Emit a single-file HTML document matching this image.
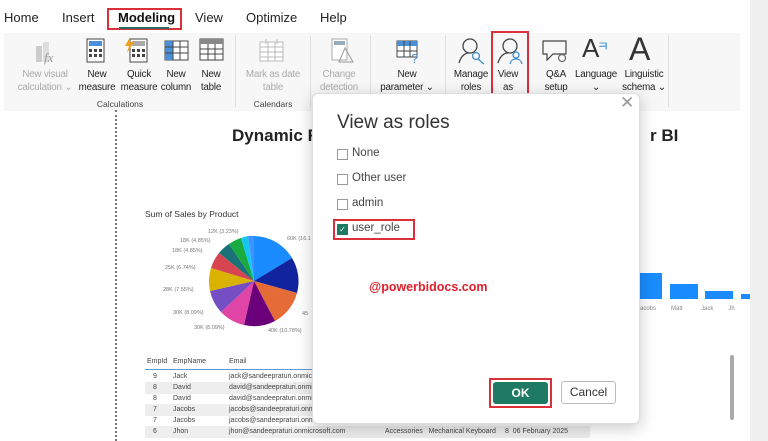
<!DOCTYPE html>
<html><head><style>
*{margin:0;padding:0;box-sizing:border-box}
body{width:768px;height:441px;overflow:hidden;background:#fff;font-family:"Liberation Sans",sans-serif;position:relative;color:#222}
.a{position:absolute}
.tab{position:absolute;top:10px;font-size:13px;color:#222}
.lbl{position:absolute;font-size:9.8px;text-align:center;line-height:13px;color:#222;white-space:nowrap;letter-spacing:-0.2px}
.dis{color:#aaa}
.grp{position:absolute;font-size:8.5px;color:#444;top:99px;text-align:center}
.sep{position:absolute;top:35px;width:1px;height:72px;background:#e0e0e0}
.cb{position:absolute;left:337px;width:11px;height:11px;border:1px solid #999;background:#fff}
.ct{position:absolute;left:352px;font-size:11.5px;color:#444}
.row{position:absolute;left:145px;width:445px;height:12px;font-size:7px;color:#444;line-height:12px}
.row span{position:absolute}
</style></head><body>
<div class="tab" style="left:4px">Home</div>
<div class="tab" style="left:62px">Insert</div>
<div class="tab" style="left:118px;font-weight:bold;color:#111">Modeling</div>
<div class="a" style="left:107px;top:8px;width:75px;height:22px;border:2px solid #d9303a"></div>
<div class="a" style="left:119px;top:27px;width:50px;height:2px;background:#2f6a60"></div>
<div class="tab" style="left:195px">View</div>
<div class="tab" style="left:246px">Optimize</div>
<div class="tab" style="left:320px">Help</div>
<div class="a" style="left:4px;top:33px;width:736px;height:78px;background:#f7f7f7"></div>
<div class="a" style="left:750px;top:0;width:18px;height:441px;background:#f0f0f0"></div>
<svg class="a" style="left:30px;top:38px" width="30" height="28"><rect x="6" y="8" width="6" height="16" fill="#ccc"/><rect x="13" y="4" width="6" height="20" fill="#ddd"/><text x="14" y="24" font-size="13" font-style="italic" fill="#999" font-family="Liberation Serif">fx</text></svg>
<svg class="a" style="left:86px;top:38px" width="20" height="26"><rect x="1" y="1" width="17" height="23" fill="#fff" stroke="#444"/><rect x="3" y="3" width="13" height="5" fill="#4a90d9"/><g fill="#444"><rect x="3" y="11" width="3" height="3"/><rect x="8" y="11" width="3" height="3"/><rect x="13" y="11" width="3" height="3"/><rect x="3" y="16" width="3" height="3"/><rect x="8" y="16" width="3" height="3"/><rect x="13" y="16" width="3" height="3"/></g></svg>
<svg class="a" style="left:123px;top:36px" width="26" height="28"><rect x="7" y="3" width="17" height="23" fill="#fff" stroke="#444"/><rect x="9" y="5" width="13" height="5" fill="#aaa"/><g fill="#444"><rect x="9" y="13" width="3" height="3"/><rect x="14" y="13" width="3" height="3"/><rect x="19" y="13" width="3" height="3"/><rect x="9" y="18" width="3" height="3"/><rect x="14" y="18" width="3" height="3"/><rect x="19" y="18" width="3" height="3"/></g><path d="M7 1 L2 10 H6 L4 17 L11 6 H7 Z" fill="#f0a020"/></svg>
<svg class="a" style="left:164px;top:40px" width="26" height="22"><rect x="1" y="1" width="23" height="19" fill="#fff" stroke="#444"/><rect x="1" y="1" width="8" height="19" fill="#4a90d9"/><path d="M1 7H24M1 13H24M9 1V20M16 1V20" stroke="#444"/></svg>
<svg class="a" style="left:199px;top:38px" width="26" height="24"><rect x="1" y="1" width="23" height="21" fill="#fff" stroke="#444"/><rect x="1" y="1" width="23" height="5" fill="#888"/><path d="M1 11H24M1 16H24M9 6V22M16 6V22" stroke="#444"/></svg>
<svg class="a" style="left:259px;top:38px" width="26" height="24"><rect x="1" y="4" width="23" height="19" fill="#fff" stroke="#bbb"/><path d="M1 9H24M1 14H24M1 19H24M9 4V23M16 4V23M7 1V6M18 1V6" stroke="#bbb"/></svg>
<svg class="a" style="left:330px;top:38px" width="26" height="26"><rect x="2" y="1" width="15" height="21" fill="#fff" stroke="#aaa"/><rect x="4" y="3" width="11" height="4" fill="#9ab"/><path d="M15 10 L23 24 H9 Z" fill="none" stroke="#999"/></svg>
<svg class="a" style="left:396px;top:40px" width="26" height="24"><rect x="1" y="1" width="20" height="16" fill="#fff" stroke="#444"/><rect x="1" y="1" width="20" height="5" fill="#4a90d9"/><path d="M1 11H21M8 1V17M14 1V17" stroke="#444"/><text x="15" y="23" font-size="13" fill="#4a90d9">?</text></svg>
<svg class="a" style="left:458px;top:37px" width="28" height="28" fill="none" stroke="#444" stroke-width="1.3"><circle cx="12" cy="9" r="7"/><path d="M1 26 C3 19 7 16 11 16"/><circle cx="18" cy="19" r="3.5" stroke="#3a8fd0"/><path d="M20 22 L26 27" stroke="#3a8fd0"/></svg>
<svg class="a" style="left:496px;top:37px" width="28" height="28" fill="none" stroke="#444" stroke-width="1.3"><circle cx="14" cy="9" r="7"/><path d="M2 26 C4 19 8 16 12 16"/><circle cx="20" cy="18" r="3" stroke="#3a8fd0"/><path d="M14 27 C15 23 17 22 20 22 C23 22 25 23 26 27" stroke="#3a8fd0"/></svg>
<svg class="a" style="left:541px;top:39px" width="28" height="26" fill="none" stroke="#444" stroke-width="1.2"><path d="M2 2H25V15H12L6 21V15H2Z"/><circle cx="21" cy="19" r="3.5" stroke="#666"/></svg>
<div class="a" style="left:582px;top:33px;font-size:26px;color:#333">A</div>
<div class="a" style="left:597px;top:36px;font-size:13px;color:#3a8fd0">ㅋ</div>
<div class="a" style="left:629px;top:31px;font-size:32px;color:#333">A</div>
<div class="lbl dis" style="left:14px;top:68px;width:62px">New visual<br>calculation ⌄</div>
<div class="lbl" style="left:76px;top:68px;width:42px">New<br>measure</div>
<div class="lbl" style="left:118px;top:68px;width:42px">Quick<br>measure</div>
<div class="lbl" style="left:157px;top:68px;width:38px">New<br>column</div>
<div class="lbl" style="left:195px;top:68px;width:32px">New<br>table</div>
<div class="lbl dis" style="left:238px;top:68px;width:70px">Mark as date<br>table</div>
<div class="lbl dis" style="left:315px;top:68px;width:48px">Change<br>detection</div>
<div class="lbl" style="left:375px;top:68px;width:64px">New<br>parameter ⌄</div>
<div class="lbl" style="left:450px;top:68px;width:42px">Manage<br>roles</div>
<div class="lbl" style="left:493px;top:68px;width:30px">View<br>as</div>
<div class="lbl" style="left:538px;top:68px;width:36px">Q&amp;A<br>setup</div>
<div class="lbl" style="left:571px;top:68px;width:50px">Language<br>⌄</div>
<div class="lbl" style="left:620px;top:68px;width:48px">Linguistic<br>schema ⌄</div>
<div class="a" style="left:491px;top:31px;width:38px;height:65px;border:2px solid #d9303a"></div>
<div class="grp" style="left:70px;width:100px">Calculations</div>
<div class="grp" style="left:238px;width:70px">Calendars</div>
<div class="sep" style="left:235px"></div><div class="sep" style="left:310px"></div><div class="sep" style="left:370px"></div><div class="sep" style="left:445px"></div><div class="sep" style="left:668px"></div>
<div class="a" style="left:115px;top:110px;height:331px;border-left:2px dotted #777"></div>
<div class="a" style="left:232px;top:126px;font-size:17px;font-weight:bold;color:#222">Dynamic R</div>
<div class="a" style="left:650px;top:126px;font-size:17px;font-weight:bold;color:#222">r BI</div>
<div class="a" style="left:145px;top:209px;font-size:8.5px;color:#333">Sum of Sales by Product</div>
<svg class="a" style="left:150px;top:225px" width="170" height="115">
<g transform="translate(104,56)">
<path d="M0 0 L0 -45 A45 45 0 0 1 38 -23 Z" fill="#1a8cff"/>
<path d="M0 0 L38 -23 A45 45 0 0 1 43 12 Z" fill="#12239e"/>
<path d="M0 0 L43 12 A45 45 0 0 1 21 40 Z" fill="#e66c37"/>
<path d="M0 0 L21 40 A45 45 0 0 1 -10 44 Z" fill="#6b007b"/>
<path d="M0 0 L-10 44 A45 45 0 0 1 -33 31 Z" fill="#e044a7"/>
<path d="M0 0 L-33 31 A45 45 0 0 1 -44 10 Z" fill="#744ec2"/>
<path d="M0 0 L-44 10 A45 45 0 0 1 -43 -13 Z" fill="#d9b300"/>
<path d="M0 0 L-43 -13 A45 45 0 0 1 -35 -28 Z" fill="#d64550"/>
<path d="M0 0 L-35 -28 A45 45 0 0 1 -25 -37 Z" fill="#197278"/>
<path d="M0 0 L-25 -37 A45 45 0 0 1 -13 -43 Z" fill="#1aab40"/>
<path d="M0 0 L-13 -43 A45 45 0 0 1 -6 -45 Z" fill="#15c6f4"/>
<path d="M0 0 L-6 -45 A45 45 0 0 1 0 -45 Z" fill="#4092ff"/>
</g>
<g font-size="5.5" fill="#777" font-family="Liberation Sans"><text x="58" y="8">12K (3.23%)</text><text x="30" y="17">18K (4.85%)</text><text x="22" y="27">18K (4.85%)</text><text x="15" y="44">25K (6.74%)</text><text x="13" y="66">28K (7.55%)</text><text x="23" y="89">30K (8.09%)</text><text x="44" y="104">30K (8.09%)</text><text x="118" y="107">40K (10.78%)</text><text x="137" y="15">60K (16.1</text><text x="152" y="90">45</text></g>
</svg>
<div class="a" style="left:630px;top:273px;width:32px;height:26px;background:#1a8cff"></div>
<div class="a" style="left:670px;top:284px;width:28px;height:15px;background:#1a8cff"></div>
<div class="a" style="left:705px;top:291px;width:28px;height:8px;background:#1a8cff"></div>
<div class="a" style="left:741px;top:294px;width:9px;height:5px;background:#1a8cff"></div>
<div class="a" style="left:640px;top:306px;font-size:6px;color:#888;width:110px;white-space:nowrap">acobs &nbsp;&nbsp;&nbsp;&nbsp;&nbsp;&nbsp;&nbsp; Matt &nbsp;&nbsp;&nbsp;&nbsp;&nbsp;&nbsp;&nbsp;&nbsp;&nbsp; Jack &nbsp;&nbsp;&nbsp;&nbsp;&nbsp;&nbsp;&nbsp; Jh</div>
<div class="a" style="left:730px;top:355px;width:4px;height:65px;background:#aaa;border-radius:2px"></div>
<div class="row" style="top:356px;height:14px;border-bottom:1px solid #5b9bd5"><span style="left:2px">EmpId</span><span style="left:28px">EmpName</span><span style="left:84px">Email</span></div>
<div class="row" style="top:371px"><span style="left:8px">9</span><span style="left:28px">Jack</span><span style="left:84px">jack@sandeepraturi.onmicrosoft.com</span></div>
<div class="row" style="top:382px;background:#eee"><span style="left:8px">8</span><span style="left:28px">David</span><span style="left:84px">david@sandeepraturi.onmicrosoft.com</span></div>
<div class="row" style="top:393px"><span style="left:8px">8</span><span style="left:28px">David</span><span style="left:84px">david@sandeepraturi.onmicrosoft.com</span></div>
<div class="row" style="top:404px;background:#eee"><span style="left:8px">7</span><span style="left:28px">Jacobs</span><span style="left:84px">jacobs@sandeepraturi.onmicrosoft.com</span></div>
<div class="row" style="top:415px"><span style="left:8px">7</span><span style="left:28px">Jacobs</span><span style="left:84px">jacobs@sandeepraturi.onmicrosoft.com</span></div>
<div class="row" style="top:426px;background:#eee"><span style="left:8px">6</span><span style="left:28px">Jhon</span><span style="left:84px">jhon@sandeepraturi.onmicrosoft.com</span><span style="left:240px">Accessories &nbsp; Mechanical Keyboard</span><span style="left:360px">8 &nbsp;06 February 2025</span></div>
<div class="a" style="left:312px;top:93px;width:328px;height:331px;background:#fff;border:1px solid #ddd;border-radius:6px;box-shadow:0 4px 16px rgba(0,0,0,.22)"></div>
<div class="a" style="left:620px;top:93px;font-size:17px;color:#999">✕</div>
<div class="a" style="left:337px;top:112px;font-size:19px;color:#333">View as roles</div>
<div class="cb" style="top:149px"></div><div class="ct" style="top:147px">None</div>
<div class="cb" style="top:174px"></div><div class="ct" style="top:172px">Other user</div>
<div class="cb" style="top:199px"></div><div class="ct" style="top:197px">admin</div>
<div class="cb" style="top:224px;background:#1f7a63;border-color:#1f7a63;color:#fff;font-size:8px;line-height:9px;text-align:center">✓</div><div class="ct" style="top:222px">user_role</div>
<div class="a" style="left:333px;top:219px;width:82px;height:21px;border:2px solid #d9303a"></div>
<div class="a" style="left:369px;top:280px;font-size:12.5px;font-weight:bold;color:#e0202c">@powerbidocs.com</div>
<div class="a" style="left:489px;top:378px;width:63px;height:30px;border:2px solid #d9303a"></div>
<div class="a" style="left:493px;top:382px;width:55px;height:22px;background:#1f7a63;border-radius:3px;color:#fff;font-weight:bold;font-size:12px;text-align:center;line-height:22px">OK</div>
<div class="a" style="left:561px;top:381px;width:55px;height:23px;border:1px solid #bbb;border-radius:3px;font-size:12px;text-align:center;line-height:21px;color:#333">Cancel</div>
</body></html>
